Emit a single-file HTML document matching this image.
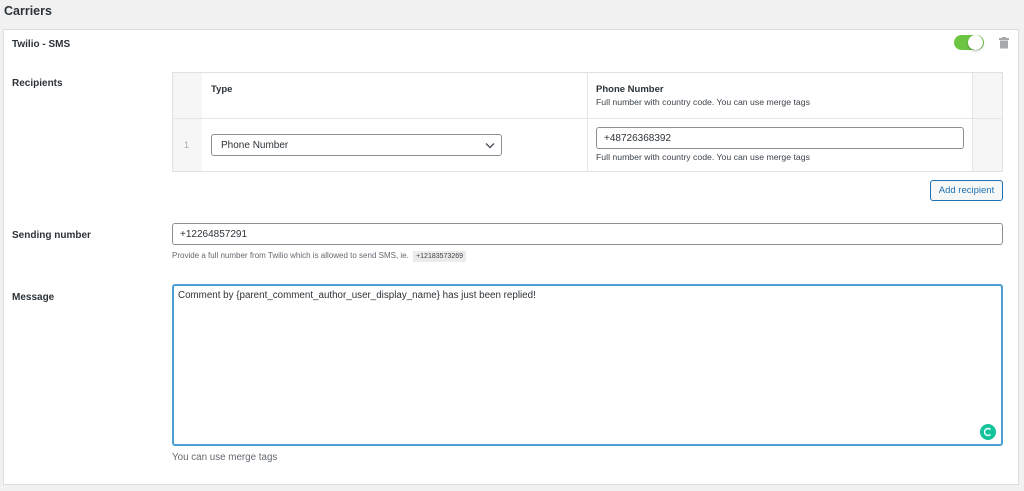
<!DOCTYPE html>
<html><head><style>
*{box-sizing:border-box;margin:0;padding:0}
body{width:1024px;height:491px;background:#f1f1f1;font-family:"Liberation Sans",sans-serif;color:#23282d;font-size:10px;position:relative;overflow:hidden}
.a{position:absolute}
.card{left:3px;top:29px;width:1016px;height:456px;background:#fff;border:1px solid #dcdcde}
.lbl{font-size:10px;font-weight:bold;color:#2c3338}
.inp{background:#fff;border:1px solid #8c8f94;border-radius:3px;font-size:10px;color:#2c3338;padding-left:7px;display:flex;align-items:center}
.help{font-size:8px;color:#646970}
</style></head><body>
<div class="a" style="left:4px;top:4px;font-size:12.5px;font-weight:bold;color:#2c3338">Carriers</div>
<div class="a card"></div>
<div class="a lbl" style="left:12px;top:39px">Twilio - SMS</div>
<div class="a" style="left:954px;top:35px;width:30px;height:15px;border-radius:8px;background:#6cc644"></div>
<div class="a" style="left:968px;top:35px;width:15px;height:15px;border-radius:50%;background:#fff;box-shadow:0 1px 2px rgba(0,0,0,.3)"></div>
<svg class="a" style="left:999px;top:37px" width="10" height="12" viewBox="0 0 10 12"><rect x="0" y="1" width="10" height="2" fill="#a7aaad"/><rect x="3" y="0" width="4" height="2" fill="#a7aaad"/><rect x="1" y="3.5" width="8" height="8" fill="#a7aaad"/></svg>

<div class="a lbl" style="left:12px;top:78px">Recipients</div>
<div class="a" style="left:172px;top:72px;width:831px;height:100px;border:1px solid #e1e1e1;background:#f6f6f6"></div>
<div class="a" style="left:202px;top:73px;width:770px;height:98px;background:#fff"></div>
<div class="a" style="left:202px;top:118px;width:770px;height:1px;background:#e5e5e5"></div>
<div class="a" style="left:172px;top:118px;width:30px;height:1px;background:#e5e5e5"></div>
<div class="a" style="left:972px;top:118px;width:30px;height:1px;background:#e5e5e5"></div>
<div class="a" style="left:587px;top:73px;width:1px;height:98px;background:#e5e5e5"></div>
<div class="a" style="left:972px;top:73px;width:1px;height:98px;background:#e5e5e5"></div>
<div class="a lbl" style="left:211px;top:84px;font-size:9.5px">Type</div>
<div class="a lbl" style="left:596px;top:84px;font-size:9.5px">Phone Number</div>
<div class="a" style="left:596px;top:97px;font-size:8.7px;color:#3c434a">Full number with country code. You can use merge tags</div>
<div class="a" style="left:184px;top:140px;font-size:9px;color:#a7aaad">1</div>
<div class="a inp" style="left:211px;top:134px;width:291px;height:22px;padding-left:9px">Phone Number</div>
<svg class="a" style="left:485px;top:142px" width="10" height="7" viewBox="0 0 10 7"><path d="M1 1.5L5 5.5 9 1.5" stroke="#50575e" stroke-width="1.4" fill="none"/></svg>
<div class="a inp" style="left:596px;top:127px;width:368px;height:22px">+48726368392</div>
<div class="a" style="left:596px;top:152px;font-size:8.7px;color:#3c434a">Full number with country code. You can use merge tags</div>
<div class="a" style="left:930px;top:180px;width:73px;height:21px;border:1px solid #2271b1;border-radius:3px;background:#f6f7f7;color:#2271b1;font-size:9.5px;display:flex;align-items:center;justify-content:center">Add recipient</div>

<div class="a lbl" style="left:12px;top:230px">Sending number</div>
<div class="a inp" style="left:172px;top:223px;width:831px;height:22px">+12264857291</div>
<div class="a help" style="left:172px;top:251px">Provide a full number from Twilio which is allowed to send SMS, ie. <span style="background:#ebebeb;color:#3c434a;font-size:7px;padding:2px 3px;margin-left:2px">+12183573269</span></div>

<div class="a lbl" style="left:12px;top:292px">Message</div>
<div class="a" style="left:172px;top:284px;width:831px;height:162px;border:2px solid #4d9fd2;border-radius:3px;background:#fff"></div>
<div class="a" style="left:178px;top:290px;font-size:9.8px;color:#2c3338">Comment by {parent_comment_author_user_display_name} has just been replied!</div>
<div class="a" style="left:980px;top:424px;width:16px;height:16px;border-radius:50%;background:#15c39a"></div>
<svg class="a" style="left:980px;top:424px" width="16" height="16" viewBox="0 0 16 16"><path d="M10.5 5.5A3.5 3.5 0 1 0 10.5 10.5" stroke="#fff" stroke-width="1.4" fill="none"/></svg>
<div class="a help" style="left:172px;top:452px;font-size:9.8px">You can use merge tags</div>
</body></html>
